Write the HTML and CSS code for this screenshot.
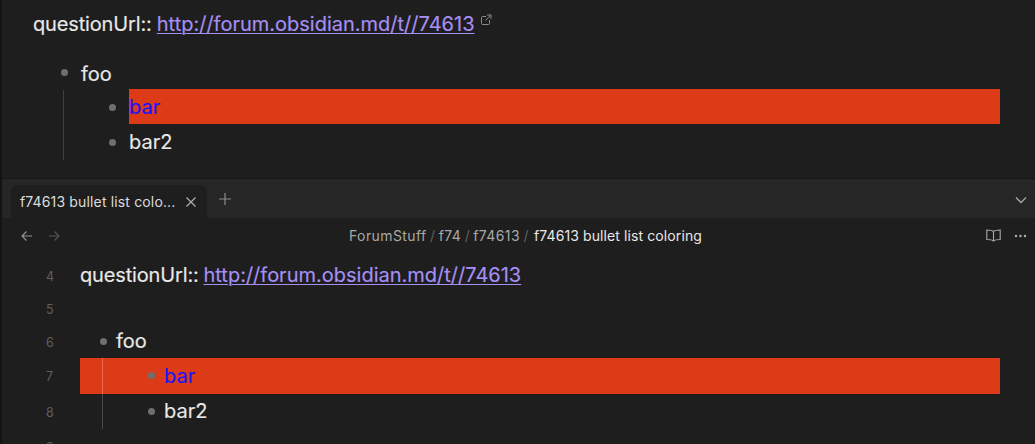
FILE: index.html
```html
<!DOCTYPE html>
<html lang="en">
<head>
<meta charset="utf-8">
<title>f74613 bullet list coloring</title>
<link rel="stylesheet" href="styles.css">
</head>
<body>
<div class="app">
  <section class="reading">
    <p class="meta"><span class="label">questionUrl::</span> <a class="link" href="#">http://forum.obsidian.md/t//74613</a><svg class="ext" viewBox="0 0 12 12" width="12" height="12" fill="none" stroke="currentColor" stroke-width="1"><path d="M6 2.500H2.500a1 1 0 0 0-1 1v6a1 1 0 0 0 1 1h6a1 1 0 0 0 1-1V6"/><path d="M7 1h4v4M11 1 5.500 6.500"/></svg></p>
    <ul class="rlist">
      <li class="ritem lvl1"><span class="dot"></span>foo</li>
      <li class="ritem lvl2 hl"><span class="dot"></span><span class="hltext">bar</span></li>
      <li class="ritem lvl2"><span class="dot"></span>bar2</li>
      <li class="rguide"></li>
    </ul>
  </section>
  <div class="tabbar">
    <div class="tab"><span class="tabtitle">f74613 bullet list colo...</span>
      <svg class="tabx" viewBox="0 0 12 12" width="12" height="12" fill="none" stroke="currentColor" stroke-width="1.2"><path d="M1.500 1.500l9 9M10.500 1.500l-9 9"/></svg>
    </div>
    <svg class="plus" viewBox="0 0 14 14" width="14" height="14" fill="none" stroke="currentColor" stroke-width="1.2"><path d="M7 1v12M1 7h12"/></svg>
    <svg class="chev" viewBox="0 0 12 8" width="12" height="8" fill="none" stroke="currentColor" stroke-width="1.3"><path d="M1 1.500l5 5 5-5"/></svg>
  </div>
  <div class="navbar">
    <div class="navbtns">
      <svg class="back" viewBox="0 0 12 12" width="12" height="12" fill="none" stroke="currentColor" stroke-width="1.1"><path d="M11 6H1M5.500 1.500 1 6l4.500 4.500"/></svg>
      <svg class="fwd" viewBox="0 0 12 12" width="12" height="12" fill="none" stroke="currentColor" stroke-width="1.1"><path d="M1 6h10M6.500 1.500 11 6l-4.500 4.500"/></svg>
    </div>
    <div class="crumbs"><span>ForumStuff</span><i>/</i><span>f74</span><i>/</i><span>f74613</span><i>/</i><b>f74613 bullet list coloring</b></div>
    <div class="navright">
      <svg class="book" viewBox="0 0 15 13" width="15" height="13" fill="none" stroke="currentColor" stroke-width="1.1"><path d="M7.500 2.500C6.500 1.500 5 1 .8 1v9.500c4.200 0 5.700.5 6.700 1.500 1-1 2.500-1.500 6.700-1.500V1C10 1 8.500 1.500 7.500 2.500zM7.500 2.500V12"/></svg>
      <svg class="more" viewBox="0 0 13 4" width="13" height="4" fill="currentColor"><circle cx="2" cy="2" r="1.200"/><circle cx="6.500" cy="2" r="1.200"/><circle cx="11" cy="2" r="1.200"/></svg>
    </div>
  </div>
  <section class="editor">
    <div class="line first"><span class="num">4</span><div class="code"><span class="label">questionUrl::</span> <a class="link" href="#">http://forum.obsidian.md/t//74613</a></div></div>
    <div class="line second"><span class="num">5</span><div class="code"></div></div>
    <div class="line before"><span class="num">6</span><div class="code l1"><span class="dot"></span>foo</div></div>
    <div class="line tall"><span class="num">7</span><div class="code l2 hl"><span class="guide"></span><span class="dot"></span><span class="hltext">bar</span></div></div>
    <div class="line"><span class="num">8</span><div class="code l2"><span class="guide"></span><span class="dot"></span>bar2</div></div>
    <div class="line"><span class="num">9</span><div class="code"></div></div>
  </section>
</div>
</body>
</html>
```
FILE: styles.css
```css
* { box-sizing: border-box; }
html, body { margin: 0; height: 100%; }
body {
  background: #1e1e1e;
  color: #dcddde;
  font-family: Inter, "Liberation Sans", sans-serif;
  overflow: hidden;
}
.app {
  width: 1035px;
  height: 444px;
  overflow: hidden;
  border-left: 2px solid #141414;
  display: flex;
  flex-direction: column;
}
.link { color: #a68ff5; text-decoration: underline; text-underline-offset: 2px; text-decoration-thickness: 1.3px; }
.label { letter-spacing: -.15px; }
.dot {
  position: absolute;
  width: 7px;
  height: 7px;
  border-radius: 50%;
  background: #6f6f6f;
}
.hl { background: #dd3a18; }
.hltext { color: #1414ff; }

.reading {
  height: 178px;
  flex: none;
  font-size: 20px;
  line-height: 35px;
  color: #e8e8e8;
  -webkit-text-stroke: .15px currentColor;
}
.meta { margin: 0; padding: 7px 0 0 31px; height: 54px; white-space: nowrap; word-spacing: -.5px; }
.ext { color: #8a8a8a; margin-left: 5px; vertical-align: 5px; }
.rlist { list-style: none; margin: 0; padding: 0 33px 0 0; position: relative; }
.ritem { position: relative; height: 35px; line-height: 37px; }
.rlist .lvl1 { margin-left: 79px; line-height: 40px; }
.rlist .lvl2 { margin-left: 127px; margin-right: 2px; }
.rlist .dot { left: -20px; top: 15px; }
.rguide { position: absolute; left: 61px; top: 36px; width: 1px; height: 70px; background: #3f3f3f; }

.tabbar {
  height: 40px;
  flex: none;
  background: #262626;
  border-top: 1px solid #161616;
  display: flex;
  align-items: flex-end;
  padding-left: 9px;
  padding-right: 8px;
  position: relative;
}
.tab {
  width: 196px;
  height: 33px;
  background: #1e1e1e;
  border-radius: 7px 7px 0 0;
  display: flex;
  align-items: center;
  padding: 0 10px 0 9px;
  justify-content: space-between;
  font-size: 14px;
  letter-spacing: .15px;
  color: #dcdcdc;
}
.tabtitle { white-space: nowrap; }
.tabx { color: #b0b0b0; }
.plus { color: #8c8c8c; margin: 0 0 12px 11px; }
.chev { color: #a8a8a8; margin: 0 0 14px auto; }

.navbar {
  height: 35px;
  flex: none;
  display: flex;
  align-items: center;
  position: relative;
  padding: 0 8px 0 19px;
}
.navbtns { display: flex; gap: 15px; flex: none; width: 340px; }
.back { color: #969696; }
.fwd { color: #555; }
.crumbs { display: flex; gap: 3.5px; font-size: 14px; color: #a8a8a8; white-space: nowrap; margin-left: -12px; }
.crumbs span { letter-spacing: .4px; }
.crumbs i { font-style: normal; color: #5e5e5e; }
.crumbs b { font-weight: 400; color: #e8e8e8; letter-spacing: .1px; margin-left: 2px; }
.navright { margin-left: auto; display: flex; align-items: center; gap: 13px; }
.book { color: #a8a8a8; }
.more { color: #b0b0b0; }

.editor { font-size: 20px; color: #e8e8e8; -webkit-text-stroke: .15px currentColor; }
.line { display: flex; height: 35.3px; line-height: 35px; }
.line.first { height: 40.3px; padding-top: 5px; word-spacing: -.8px; }
.line.second { height: 30.3px; }
.line.second .num { margin-top: -1px; padding-top: 0; }
.line.before { height: 34.8px; }
.line.tall { height: 35.8px; line-height: 36px; }
.num {
  width: 78px;
  flex: none;
  font-size: 12.5px;
  color: #5f5f5f;
  padding-left: 44px;
  padding-top: 1px;
  -webkit-text-stroke: 0;
}
.code { flex: none; width: 920px; position: relative; white-space: nowrap; }
.code.l1 { padding-left: 36px; }
.code.l2 { padding-left: 84px; }
.code .dot { top: 14px; }
.code.l1 .dot { left: 20px; }
.code.l2 .dot { left: 68px; }
.guide { position: absolute; left: 22px; top: 0; width: 1px; height: 100%; background: #4a4a4a; }
.code.hl .guide { background: #ea6a4c; }
```
